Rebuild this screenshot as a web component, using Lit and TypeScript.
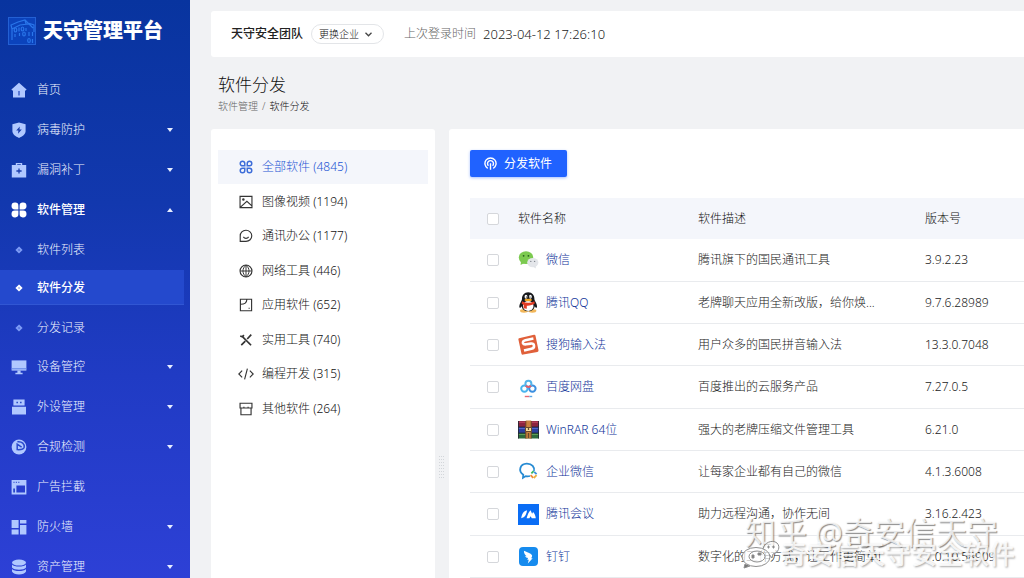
import { LitElement, html, css, svg, nothing } from "lit";
import { customElement, state } from "lit/decorators.js";
import { classMap } from "lit/directives/class-map.js";

const navIcons: Record<string, unknown> = {
  home: svg`<path fill="currentColor" d="M8 .8 15.6 7.4 14.8 8.4H14V15.4H2V8.4H1.2L.4 7.4Z"/><path stroke="#2347bb" stroke-width="1.2" d="M8 9v4.6"/>`,
  shield: svg`<path fill="currentColor" d="M8 .4 14.6 2.2V9c0 3.4-3.2 5.6-6.6 6.9C4.600 14.600 1.400 12.400 1.400 9V2.200Z"/><path fill="#1a3cab" d="M8.800 4.400 5.200 8.600h2.200L7 11.800l3.800-4.400H8.500Z"/>`,
  kit: svg`<path fill="currentColor" fill-rule="evenodd" d="M4.800 3V1h6.400v2h4v12.400H.8V3Zm1.400 0h3.600v-.8H6.200Z"/><path stroke="#1a3cab" stroke-width="1.300" d="M8 6.400v5.200M5.400 9h5.200"/>`,
  apps: svg`<g fill="currentColor"><path d="M3.900.6a3.300 3.300 0 0 1 3.500 3.300v3.500H3.900A3.400 3.400 0 0 1 3.900.6Z"/><path d="M12.100.6a3.300 3.300 0 0 0-3.500 3.300v3.500h3.500a3.400 3.400 0 0 0 0-6.800Z"/><path d="M3.900 15.400a3.300 3.300 0 0 0 3.500-3.300V8.600H3.900a3.400 3.400 0 0 0 0 6.800Z"/><path d="M12.100 15.400a3.300 3.300 0 0 1-3.500-3.300V8.600h3.500a3.400 3.400 0 0 1 0 6.800Z"/></g>`,
  monitor: svg`<path fill="currentColor" d="M.6 1.400h14.800v10.200H.6Z"/><path stroke="#5f80e6" stroke-width="1" d="M.6 9.800h14.800"/><path fill="currentColor" d="M6.400 11.600h3.200v2.200h2v1.400H4.400v-1.400h2Z"/>`,
  usb: svg`<path fill="currentColor" d="M2.400.6h11.200v6H2.400ZM1 7.800h14v7.600H1Z"/><path fill="#2c4fc8" d="M5.400 2.800h1.600v1.400H5.400ZM9 2.800h1.600v1.400H9Z"/>`,
  check: svg`<circle cx="8" cy="8" r="7.400" fill="currentColor"/><path fill="none" stroke="#2c4bcf" stroke-width="1.500" d="M6.400 2.800c4.800-.6 7.200 2.400 6.800 5.400-.6 2.200-3.600 2.600-7 2.400V5.200l4.400 3"/>`,
  adblock: svg`<path fill="currentColor" fill-rule="evenodd" d="M.6 1h14.800v14.400H.6Zm4.800 5.400v7H14v-7Z"/><path fill="#2b49cc" d="M2.200 9.400h1.800v4H2.200Z"/><path stroke="#2b49cc" d="M2.400 3.300h1.200M4.800 3.300H6M7.200 3.300h1.200"/>`,
  wall: svg`<path fill="currentColor" d="M.6 1h7v8h-7ZM9 1h6.400v3.600H9ZM9 6h6.400v9.400H9ZM.6 10.400h7v5h-7Z"/>`,
  database: svg`<g fill="currentColor"><ellipse cx="8" cy="3.600" rx="7" ry="3"/><path d="M1 5.400c2 2.800 12 2.800 14 0v3c-2 3-12 3-14 0Z"/><path d="M1 10c2 2.800 12 2.800 14 0v2.600c-1.600 3.800-12.400 3.800-14 0Z"/></g>`,
  diamond: svg`<path fill="none" stroke="currentColor" stroke-width="2" d="M8 5.800 10.200 8 8 10.200 5.800 8Z"/>`,
};

const categoryIcons: Record<string, unknown> = {
  all: svg`<path stroke-width="1.700" d="M6.600 6.600H4A2.600 2.600 0 1 1 6.600 4ZM9.400 6.600H12A2.600 2.600 0 1 0 9.400 4ZM6.600 9.400H4A2.600 2.600 0 1 0 6.600 12ZM9.400 9.400H12A2.600 2.600 0 1 1 9.400 12Z"/>`,
  image: svg`<path d="M1.200 1.600h13.600v12.800H1.200ZM2 13.600l7-6.400 5.400 5"/><circle cx="5" cy="5.200" r=".8"/>`,
  chat: svg`<path d="M1.400 14.200V8A6.600 6.400 0 1 1 8 14.200ZM5 9c1.400 2.200 4.600 2.200 6 0"/>`,
  globe: svg`<circle cx="8" cy="8" r="6.800"/><path stroke-width="1.100" d="M1.400 8h13.200M8 1.400v13.200M8 1.400c-4.600 3.400-4.600 9.800 0 13.200M8 1.400c4.600 3.400 4.600 9.800 0 13.200"/>`,
  app: svg`<path d="M1.600 1.400h12.800v13.200H1.600ZM9 1.600C8.800 6 6.600 7 1.800 7.200M11.600 11v1.200"/>`,
  tools: svg`<path stroke-width="1.900" d="m2.600 13.800 4.600-4.600M9.400 6.800l4.600-5M1.400 3.400l2.400 1L5.600 2.400M4.200 4.400l9.600 9.600M10.800 11l3 3"/>`,
  code: svg`<path d="M3.600 4.200-.2 8l3.800 3.800M12.400 4.200 16.200 8l-3.800 3.800M9.600 1.800 6.400 14.200"/>`,
  other: svg`<path stroke-width="1.300" d="M1.200 1.400h13.600v5.400H1.200ZM2.200 6.800v7.800h11.600V6.800"/><path stroke-width="1.300" d="M5.600 5.400v1.400M10.400 5.400v1.400"/>`,
};

const appIcons: Record<string, unknown> = {
  wechat: svg`<ellipse cx="8" cy="7.600" rx="7.200" ry="6.400" fill="#7cca50"/><path fill="#7cca50" d="M3 11.600 2.600 15 6.400 13Z"/><circle cx="5.600" cy="5.800" r=".9" fill="#27601b"/><circle cx="10.400" cy="5.800" r=".9" fill="#27601b"/><ellipse cx="14.800" cy="12.600" rx="5.600" ry="4.700" fill="#e4e6ea"/><path fill="#dfe2e6" d="m17.400 15.400.6 3-3-1.600Z"/><circle cx="12.800" cy="11.400" r=".7" fill="#828990"/><circle cx="16.600" cy="11.400" r=".7" fill="#828990"/>`,
  qq: svg`<ellipse cx="6" cy="18.800" rx="4" ry="1.900" fill="#f2b75a"/><ellipse cx="14.400" cy="18.800" rx="4" ry="1.900" fill="#f2b75a"/><path fill="#17191c" d="M10.200.2c4 0 6.200 3 6.200 6.600 0 1 .4 1.700 1 2.900 1.700 2.900 2.100 5.700 1.200 6-.7.300-1.500-.9-1.800-1.500-.7 3.300-2.900 5-6.600 5s-5.900-1.700-6.600-5c-.3.6-1.100 1.800-1.800 1.500-.9-.3-.5-3.100 1.200-6 .6-1.200 1-1.900 1-2.900 0-3.600 2.200-6.600 6.200-6.600Z"/><ellipse cx="10.200" cy="14" rx="5.300" ry="5" fill="#fff"/><ellipse cx="8" cy="4.800" rx="1.400" ry="2" fill="#fff"/><ellipse cx="12.400" cy="4.800" rx="1.400" ry="2" fill="#fff"/><circle cx="8.400" cy="5" r=".6" fill="#000"/><circle cx="12" cy="5" r=".6" fill="#000"/><ellipse cx="10.200" cy="8" rx="3.700" ry="1.200" fill="#f4a720"/><path fill="#e13c24" d="M4 9.200c4 2 8.400 2 12.400 0l.4 2.400c-2.500 1.500-5 2.400-8 2.200v3l-3.400-.5.4-3.200-2.200-1.300Z"/>`,
  sogou: svg`<path fill="#e0603a" d="m1 4.200 15-3.400q1.300-.2 1.500 1l3 14.400q.3 1.400-1.100 1.700L5.200 20.600q-1.500.3-1.800-1.200L.4 5.600Q.2 4.500 1 4.200Z"/><path fill="none" stroke="#fff" stroke-width="2.600" stroke-linejoin="round" d="m15.400 4.600-8 1.600q-3 .8-2.400 3 .6 1.500 3.200 1.100l4.500-.7q3-.3 3.300 2 .4 2.500-2.500 3.100L6 16.400"/>`,
  netdisk: svg`<g fill="none" stroke-width="2"><circle cx="6.400" cy="11.600" r="3.200" stroke="#48b4ee"/><circle cx="14.400" cy="11.600" r="3.200" stroke="#3b8fe0"/><circle cx="10.400" cy="6.800" r="3" stroke="#54b4ea"/><path stroke="#e75a6b" d="M7.900 8.600a3 3 0 0 0 5 0"/></g><path stroke="#e66b74" stroke-width="1.400" d="M6.800 19.500h4.600"/><path stroke="#5aa6e7" stroke-width="1.400" d="M11.400 19.500h2.800"/>`,
  winrar: svg`<path fill="#8c2440" d="M0 2h21v6H0Z"/><path fill="#2b3f9e" d="M0 8h21v6H0Z"/><path fill="#2c6a3c" d="M0 14h21v5.500H0Z"/><path stroke="#c04c60" d="M0 3.200h21"/><path stroke="#5a6cd0" d="M0 9.400h21"/><path stroke="#5c9c55" d="M0 15.500h21"/><path stroke="#1e2430" stroke-width=".8" d="M0 8h21M0 14h21M.5 2v17.500M20.500 2v17.500"/><path fill="#c9823f" d="M7.800 1.500h5.400v18H7.800Z"/><path stroke="#6b4527" d="M7.800 2v17.500M13.200 2v17.500"/><path fill="#f5e09a" stroke="#6a492c" d="M7.500 8.500h6v4h-6Z"/><path stroke="#6a492c" stroke-width="1.300" d="M10.500 8.500V11M10.500 14v5"/>`,
  wecom: svg`<path fill="none" stroke="#278bd3" stroke-width="1.800" d="M12 15c-1.400.4-3 .4-4.200.1L5 16.800l.3-3C-.2 9.800 2 3 8.700 2.700c5.400-.1 8.200 3.600 7.200 7.400"/><path stroke="#35b65b" stroke-width="1.800" d="m13.400 12.400 2.200-2.200"/><path stroke="#3e91dc" stroke-width="1.800" d="m16.200 10.800 2.400 2.400"/><path stroke="#efb03c" stroke-width="1.800" d="m18.600 14.200-2.800 2.800"/><path stroke="#ee8a35" stroke-width="1.800" d="m15.200 16.800-2.600-2.600"/>`,
  meeting: svg`<path fill="#0a6df5" d="M0 0h21v21H0Z"/><path fill="#fff" d="M3.200 14.200C4 10 5.400 7 9 6.200 8.600 10 7 13.500 3.200 14.200ZM8.600 14.200C9.600 10.400 10.600 8 12.600 6.200l1.500 3.500 1-1.700c1.500 1.300 2.500 4 2.700 6.200h-4l-1.200-1.900-1.200 1.900Z"/>`,
  dingtalk: svg`<rect x="1" y="1" width="19" height="19" rx="4" fill="#168bee"/><path fill="#fff" d="M5.900 4.800c3 1.300 6.800 2.400 8 4.200.6 1-.1 2.300-.8 3.200h1.600L9.800 17.600l1-3.800H9.200l.9-1.700c-1.600-.1-2.500-.9-3-2l1.600.1C7 9 5.900 7.300 5.900 4.800Z"/>`,
};

interface NavItem {
  icon: string;
  label: string;
  arrow?: "down" | "up";
  kind?: "sub" | "open";
  current?: boolean;
}

const navItems: NavItem[] = [
  { icon: "home", label: "首页" },
  { icon: "shield", label: "病毒防护", arrow: "down" },
  { icon: "kit", label: "漏洞补丁", arrow: "down" },
  { icon: "apps", label: "软件管理", arrow: "up", kind: "open" },
  { icon: "diamond", label: "软件列表", kind: "sub" },
  { icon: "diamond", label: "软件分发", kind: "sub", current: true },
  { icon: "diamond", label: "分发记录", kind: "sub" },
  { icon: "monitor", label: "设备管控", arrow: "down" },
  { icon: "usb", label: "外设管理", arrow: "down" },
  { icon: "check", label: "合规检测", arrow: "down" },
  { icon: "adblock", label: "广告拦截" },
  { icon: "wall", label: "防火墙", arrow: "down" },
  { icon: "database", label: "资产管理", arrow: "down" },
];

const categories = [
  { icon: "all", label: "全部软件", count: 4845 },
  { icon: "image", label: "图像视频", count: 1194 },
  { icon: "chat", label: "通讯办公", count: 1177 },
  { icon: "globe", label: "网络工具", count: 446 },
  { icon: "app", label: "应用软件", count: 652 },
  { icon: "tools", label: "实用工具", count: 740 },
  { icon: "code", label: "编程开发", count: 315 },
  { icon: "other", label: "其他软件", count: 264 },
];

const software = [
  { icon: "wechat", name: "微信", desc: "腾讯旗下的国民通讯工具", version: "3.9.2.23" },
  { icon: "qq", name: "腾讯QQ", desc: "老牌聊天应用全新改版，给你焕...", version: "9.7.6.28989" },
  { icon: "sogou", name: "搜狗输入法", desc: "用户众多的国民拼音输入法", version: "13.3.0.7048" },
  { icon: "netdisk", name: "百度网盘", desc: "百度推出的云服务产品", version: "7.27.0.5" },
  { icon: "winrar", name: "WinRAR 64位", desc: "强大的老牌压缩文件管理工具", version: "6.21.0" },
  { icon: "wecom", name: "企业微信", desc: "让每家企业都有自己的微信", version: "4.1.3.6008" },
  { icon: "meeting", name: "腾讯会议", desc: "助力远程沟通，协作无间", version: "3.16.2.423" },
  { icon: "dingtalk", name: "钉钉", desc: "数字化的工作方式，让工作更简单!", version: "7.0.10.58909" },
];

@customElement("side-nav")
class SideNav extends LitElement {
  static styles = css`
    :host {
      display: block;
      background: linear-gradient(180deg, #08349f 0%, #1238ae 35%, #203bc4 65%, #2d40d6 100%);
      color: #f0f4ff;
      overflow: hidden;
    }
    .brand {
      display: flex;
      align-items: center;
      gap: 7px;
      padding: 16px 8px 25px;
      height: 29px;
      color: #fff;
      font-size: 20px;
      font-weight: 900;
      white-space: nowrap;
    }
    .emblem { width: 28px; height: 28px; flex: none; }
    .list { list-style: none; margin: 0; padding: 0; }
    .link {
      display: flex;
      align-items: center;
      gap: 10px;
      height: 40px;
      padding: 0 17px 0 11px;
      color: inherit;
      text-decoration: none;
      white-space: nowrap;
    }
    .icon { width: 16px; height: 16px; flex: none; color: #b0c8ff; }
    .label { flex: 1; }
    .arrow { width: 6px; height: 4px; fill: #e6edff; }
    .up { transform: rotate(180deg); }
    .open, .open .icon { color: #fff; }
    .open { font-weight: 500; }
    .sub { height: 39px; }
    .sub .icon { color: #7d9bf5; }
    .current {
      height: 35px;
      margin: 1px 6px 3px 0;
      background: #2449cd;
      box-shadow: inset 0 -1px 0 #3156d3;
      color: #fff;
      font-weight: 500;
    }
    .current .icon { color: #fff; }
  `;

  render() {
    return html`
      <div class="brand">
        <svg class="emblem" viewBox="0 0 28 28" aria-hidden="true">
          <rect x=".5" y=".5" width="27" height="27" fill="#0b43bc" stroke="#2360d4" />
          <g fill="none" stroke="#2a76ea" stroke-width="1.200">
            <path d="M4 23V12L3 8l7-3 7-2 3 3 6 2v7M4 12l8-4 9-1 4 4M17 3l1 4" />
            <ellipse cx="7.500" cy="13" rx="1.300" ry="2" />
            <path d="M11 10.500v4M11.500 16v3M21 15v4M24.500 15v4M18 11v3M7 17v3M24.500 22v4" />
            <ellipse cx="14.500" cy="12" rx="1.300" ry="2" />
            <ellipse cx="16" cy="17" rx="1.300" ry="2" />
            <ellipse cx="21" cy="23.500" rx="1.300" ry="2" />
          </g>
        </svg>
        <span>天守管理平台</span>
      </div>
      <nav aria-label="主菜单">
        <ul class="list">
          ${navItems.map(
            (item) => html`<li>
              <a
                href="#"
                class=${classMap({ link: true, sub: item.kind === "sub", open: item.kind === "open", current: !!item.current })}
                aria-current=${item.current ? "page" : nothing}
              >
                <svg class="icon" viewBox="0 0 16 16" aria-hidden="true">${navIcons[item.icon]}</svg>
                <span class="label">${item.label}</span>
                ${item.arrow
                  ? html`<svg class=${classMap({ arrow: true, up: item.arrow === "up" })} viewBox="0 0 6 4" aria-hidden="true"><path d="M0 0h6L3 4Z" /></svg>`
                  : nothing}
              </a>
            </li>`
          )}
        </ul>
      </nav>
    `;
  }
}

@customElement("category-list")
class CategoryList extends LitElement {
  @state() selected = 0;

  static styles = css`
    :host { display: block; background: #fff; border-radius: 3px 3px 0 0; }
    .list { list-style: none; margin: 0; padding: 21px 7px; }
    .item:nth-child(odd) { margin-bottom: 1px; }
    .category {
      display: flex;
      align-items: center;
      gap: 9px;
      width: 100%;
      height: 34px;
      padding: 0 21px;
      border: 0;
      background: none;
      color: #111;
      font: inherit;
      white-space: nowrap;
      cursor: pointer;
    }
    .selected { background: #f4f6fb; color: #1c55d4; }
    .icon {
      width: 14px;
      height: 14px;
      flex: none;
      fill: none;
      stroke: currentColor;
      stroke-width: 1.3;
      opacity: 0.85;
      overflow: visible;
    }
  `;

  render() {
    return html`<ul class="list">
      ${categories.map(
        (c, i) => html`<li class="item">
          <button
            type="button"
            class=${classMap({ category: true, selected: i === this.selected })}
            @click=${() => (this.selected = i)}
          >
            <svg class="icon" viewBox="0 0 16 16" aria-hidden="true">${categoryIcons[c.icon]}</svg>
            <span>${c.label} (${c.count})</span>
          </button>
        </li>`
      )}
    </ul>`;
  }
}

@customElement("software-table")
class SoftwareTable extends LitElement {
  static styles = css`
    :host { display: block; }
    .table { width: 100%; border-collapse: separate; border-spacing: 0; table-layout: fixed; }
    .check-col { width: 48px; }
    .name-col { width: 180px; }
    .desc-col { width: 227px; }
    .head, .cell { padding: 0; text-align: left; white-space: nowrap; font-weight: inherit; }
    .head { height: 41px; background: #f4f6fb; color: #111; }
    .cell { height: 41px; border-bottom: 1px solid #e9ebee; color: #222; }
    .row:nth-child(3n + 1) .cell { height: 42px; }
    .box {
      display: block;
      appearance: none;
      box-sizing: border-box;
      width: 12px;
      height: 12px;
      margin: 0 0 0 17px;
      border: 1px solid #d5d7db;
      border-radius: 2px;
      background: #fff;
    }
    .box:checked { background: #2062ff; }
    .name { display: flex; align-items: center; gap: 7px; color: #0f3399; text-decoration: none; }
    .icon { width: 21px; height: 21px; flex: none; }
  `;

  render() {
    return html`<table class="table">
      <colgroup>
        <col class="check-col" />
        <col class="name-col" />
        <col class="desc-col" />
        <col />
      </colgroup>
      <thead>
        <tr>
          <th class="head"><input class="box" type="checkbox" aria-label="全选" /></th>
          <th class="head">软件名称</th>
          <th class="head">软件描述</th>
          <th class="head">版本号</th>
        </tr>
      </thead>
      <tbody>
        ${software.map(
          (s) => html`<tr class="row">
            <td class="cell"><input class="box" type="checkbox" aria-label=${s.name} /></td>
            <td class="cell">
              <a class="name" href="#">
                <svg class="icon" viewBox="0 0 21 21" fill="none" aria-hidden="true">${appIcons[s.icon]}</svg>
                <span>${s.name}</span>
              </a>
            </td>
            <td class="cell">${s.desc}</td>
            <td class="cell">${s.version}</td>
          </tr>`
        )}
      </tbody>
    </table>`;
  }
}

@customElement("app-root")
class AppRoot extends LitElement {
  static styles = css`
    :host {
      position: relative;
      display: grid;
      grid-template-columns: 190px minmax(0, 1fr);
      height: 100vh;
      overflow: hidden;
      background: #f1f2f4;
      color: #222;
      font: 300 12px/18px "Noto Sans", "Noto Sans CJK SC", sans-serif;
    }
    .page { display: flex; flex-direction: column; min-height: 0; padding: 11px 0 0 21px; }
    .topbar {
      display: flex;
      align-items: center;
      height: 46px;
      flex: none;
      padding-left: 20px;
      background: #fff;
      border-radius: 3px 0 0 3px;
      white-space: nowrap;
    }
    .team { font-weight: 500; color: #222; }
    .switch {
      display: flex;
      align-items: center;
      gap: 6px;
      height: 20px;
      margin: 0 20px 0 8px;
      padding: 0 11px 0 7px;
      border: 1px solid #e3e5e8;
      border-radius: 10px;
      background: #fff;
      color: #111;
      font: inherit;
      font-size: 10px;
    }
    .chevron { width: 7px; height: 5px; fill: none; stroke: #444; stroke-width: 1.3; }
    .login { color: #666; }
    .date { margin-left: 7px; color: #222; font-size: 13px; }
    .heading { padding: 16px 7px 14px; }
    .title { margin: 0; font-size: 17px; line-height: 24px; font-weight: inherit; color: #111; }
    .crumbs { display: flex; gap: 4px; font-size: 10px; line-height: 18px; color: #666; }
    .parent { color: inherit; text-decoration: none; }
    .here { color: #111; }
    .columns {
      display: grid;
      grid-template-columns: 224px 14px minmax(0, 1fr);
      flex: 1;
      min-height: 0;
    }
    .grip { align-self: center; justify-self: center; width: 6px; height: 22px; margin-top: 226px; fill: #d3d6da; }
    .panel { padding: 21px 0 0 21px; background: #fff; border-radius: 3px 0 0 0; overflow: hidden; }
    .deploy {
      display: flex;
      align-items: center;
      gap: 7px;
      height: 27px;
      margin-bottom: 21px;
      padding: 0 15px 0 14px;
      border: 0;
      border-radius: 2px;
      background: #2062ff;
      box-shadow: 0 1px 3px #2062ff66;
      color: #fff;
      font: inherit;
      font-weight: 400;
    }
    .signal { width: 13px; height: 13px; fill: none; stroke: #fff; stroke-width: 1.5; }
    .mark {
      position: absolute;
      white-space: nowrap;
      pointer-events: none;
    }
    .site {
      right: 26px;
      bottom: 26px;
      font-size: 31px;
      font-weight: 400;
      line-height: 40px;
      color: #ffffffcc;
      text-shadow: 1px 1px 1px #00000073;
    }
    .account {
      display: flex;
      align-items: center;
      gap: 0;
      right: 9px;
      bottom: 6px;
      font-size: 26px;
      font-weight: 500;
      line-height: 36px;
      color: #ffffffd9;
      text-shadow: 1px 1px 2px #00000059;
    }
    .bubbles { width: 40px; height: 32px; fill: #ffffffa0; stroke: #8e8e8e; }
  `;

  render() {
    return html`
      <side-nav></side-nav>
      <main class="page">
        <header class="topbar">
          <span class="team">天守安全团队</span>
          <button class="switch" type="button">
            更换企业
            <svg class="chevron" viewBox="0 0 7 5" aria-hidden="true"><path d="m.5.8 3 3 3-3" /></svg>
          </button>
          <span class="login">上次登录时间</span>
          <time class="date">2023-04-12 17:26:10</time>
        </header>
        <div class="heading">
          <h1 class="title">软件分发</h1>
          <div class="crumbs"><a class="parent" href="#">软件管理</a><span>/</span><span class="here">软件分发</span></div>
        </div>
        <div class="columns">
          <category-list></category-list>
          <svg class="grip" viewBox="0 0 6 22" aria-hidden="true">
            ${[0, 3, 6, 9, 12, 15, 18, 21].map((y) => svg`<path d="M0 ${y}h1v1H0ZM2 ${y}h1v1H2ZM4 ${y}h1v1H4Z" />`)}
          </svg>
          <section class="panel">
            <button class="deploy" type="button">
              <svg class="signal" viewBox="0 0 14 14" aria-hidden="true">
                <path d="M4 12.200A6 6 0 1 1 10 12.200M4.800 9.400A3.200 3.200 0 1 1 9.200 9.400M7 6.600V13.600" />
              </svg>
              分发软件
            </button>
            <software-table></software-table>
          </section>
        </div>
      </main>
      <div class="mark site">知乎 @奇安信天守</div>
      <div class="mark account">
        <svg class="bubbles" viewBox="0 0 40 32" aria-hidden="true">
          <path d="M22 11C23 5 31 1 36 5c4 4 1 10-4 11l-1 4-3-4" />
          <ellipse cx="15" cy="19" rx="14" ry="9.500" />
          <ellipse cx="16" cy="18.500" rx="8" ry="5.500" />
          <path fill="#777" d="M11 17h2v3h-2ZM17 15h3v2h-3ZM27 8h1v2h-1ZM32 8h1v2h-1ZM4 26l-1 4 6-2" />
        </svg>
        <span>奇安信天守安全软件</span>
      </div>
    `;
  }
}
